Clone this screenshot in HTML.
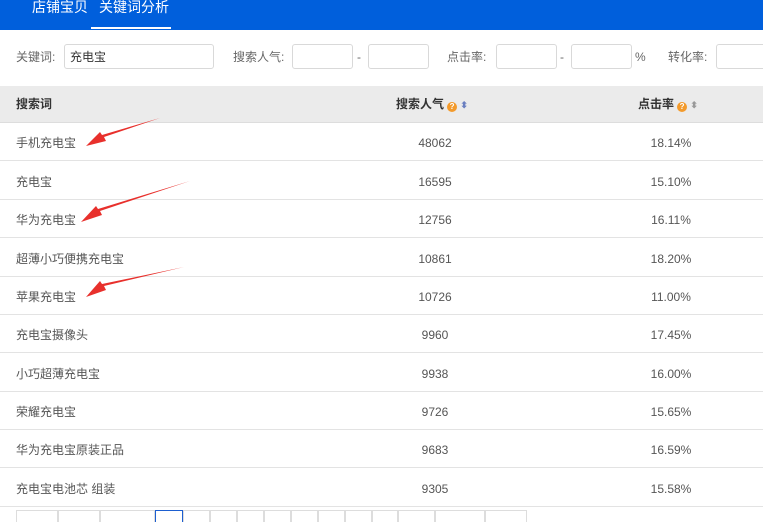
<!DOCTYPE html>
<html><head><meta charset="utf-8"><style>
*{margin:0;padding:0;box-sizing:border-box}
body{width:763px;height:515px;overflow:hidden;background:#fff;font-family:"Liberation Sans","Noto Sans CJK SC",sans-serif;font-size:12px;color:#555;position:relative}
.top{position:absolute;left:0;top:0;width:763px;height:30px;background:#005fdc}
.tab{position:absolute;top:0;height:14px;line-height:14px;color:#fff;font-size:14px}
.ul{position:absolute;left:91px;top:27px;width:80px;height:2px;background:#fff}
.lbl{position:absolute;top:45px;height:25px;line-height:25px;color:#666}
.in{position:absolute;top:44px;height:25px;border:1px solid #d9d9d9;border-radius:3px;background:#fff;padding-left:5px;line-height:24px;color:#333}
.th{position:absolute;left:0;top:86px;width:763px;height:37px;background:#ebebeb;border-bottom:1px solid #ddd}
.th>span{position:absolute;top:0;height:37px;line-height:37px;font-weight:bold;color:#333}
.q{display:inline-block;width:10px;height:10px;border-radius:50%;background:#f39a2b;color:#fff;font-size:8px;line-height:10px;text-align:center;vertical-align:-1px;margin-left:3px;font-style:normal}
.row{position:absolute;left:0;width:763px;height:38px;border-bottom:1px solid #e3e3e3}
.row span{position:absolute;top:2px;height:37px;line-height:37px;color:#555}
.c2{width:80px;left:395px;text-align:center}
.c3{width:80px;left:631px;text-align:center}
.pg{position:absolute;top:510px;height:12px;border:1px solid #ddd;border-bottom:none}
</style></head><body>
<div class="top"><div class="tab" style="left:32px">店铺宝贝</div><div class="tab" style="left:99px">关键词分析</div><div class="ul"></div></div>
<div class="lbl" style="left:16px">关键词:</div><div class="in" style="left:64px;width:150px">充电宝</div>
<div class="lbl" style="left:233px">搜索人气:</div><div class="in" style="left:292px;width:61px"></div>
<div class="lbl" style="left:357px">-</div><div class="in" style="left:368px;width:61px"></div>
<div class="lbl" style="left:447px">点击率:</div><div class="in" style="left:496px;width:61px"></div>
<div class="lbl" style="left:560px">-</div><div class="in" style="left:571px;width:61px"></div>
<div class="lbl" style="left:635px">%</div>
<div class="lbl" style="left:668px">转化率:</div><div class="in" style="left:716px;width:61px"></div>
<div class="th"><span style="left:16px">搜索词</span><span style="left:396px">搜索人气<i class="q">?</i> <b style="color:#6a7fc0;font-size:9px">⬍</b></span><span style="left:638px">点击率<i class="q">?</i> <b style="color:#999;font-size:9px">⬍</b></span></div>
<div class="row" style="top:123px"><span style="left:16px">手机充电宝</span><span class="c2">48062</span><span class="c3">18.14%</span></div>
<div class="row" style="top:162px"><span style="left:16px">充电宝</span><span class="c2">16595</span><span class="c3">15.10%</span></div>
<div class="row" style="top:200px"><span style="left:16px">华为充电宝</span><span class="c2">12756</span><span class="c3">16.11%</span></div>
<div class="row" style="top:239px"><span style="left:16px">超薄小巧便携充电宝</span><span class="c2">10861</span><span class="c3">18.20%</span></div>
<div class="row" style="top:277px"><span style="left:16px">苹果充电宝</span><span class="c2">10726</span><span class="c3">11.00%</span></div>
<div class="row" style="top:315px"><span style="left:16px">充电宝摄像头</span><span class="c2">9960</span><span class="c3">17.45%</span></div>
<div class="row" style="top:354px"><span style="left:16px">小巧超薄充电宝</span><span class="c2">9938</span><span class="c3">16.00%</span></div>
<div class="row" style="top:392px"><span style="left:16px">荣耀充电宝</span><span class="c2">9726</span><span class="c3">15.65%</span></div>
<div class="row" style="top:430px"><span style="left:16px">华为充电宝原装正品</span><span class="c2">9683</span><span class="c3">16.59%</span></div>
<div class="row" style="top:469px"><span style="left:16px">充电宝电池芯 组装</span><span class="c2">9305</span><span class="c3">15.58%</span></div>
<div class="pg" style="left:16px;width:42px"></div><div class="pg" style="left:58px;width:42px"></div><div class="pg" style="left:100px;width:55px"></div>
<div class="pg" style="left:155px;width:28px;border-color:#1d5fd0"></div>
<div class="pg" style="left:183px;width:27px"></div><div class="pg" style="left:210px;width:27px"></div><div class="pg" style="left:237px;width:27px"></div><div class="pg" style="left:264px;width:27px"></div><div class="pg" style="left:291px;width:27px"></div><div class="pg" style="left:318px;width:27px"></div><div class="pg" style="left:345px;width:27px"></div><div class="pg" style="left:372px;width:26px"></div><div class="pg" style="left:398px;width:37px"></div><div class="pg" style="left:435px;width:50px"></div><div class="pg" style="left:485px;width:42px"></div>
<svg width="763" height="515" style="position:absolute;left:0;top:0">
<g fill="#e8302c">
<polygon points="160,118 104,137 106,141 86,146 100,132 102,135"/>
<polygon points="190,181 100,211 102,215 81,222 96,206 98,209"/>
<polygon points="184,267 104,286 106,290 86,297 100,281 102,284"/>
</g></svg>
</body></html>
